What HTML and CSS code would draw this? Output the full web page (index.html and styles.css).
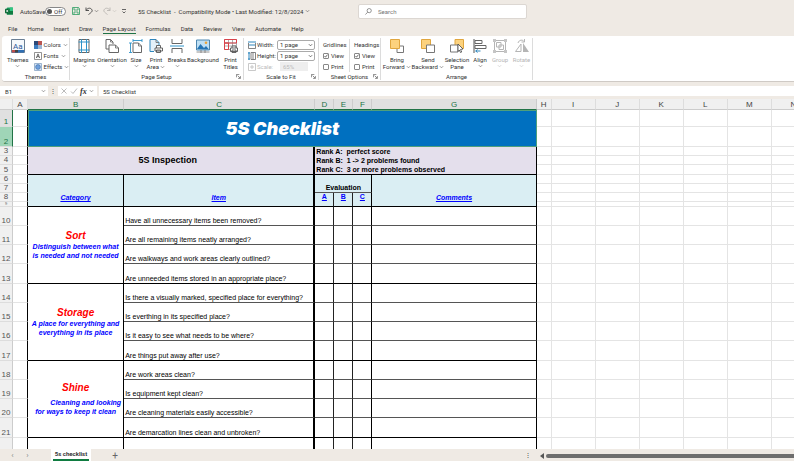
FILE: index.html
```
<!DOCTYPE html>
<html lang="en">
<head>
<meta charset="UTF-8">
<meta name="viewport" content="width=device-width, initial-scale=1.0">
<title>5S Checklist</title>
<link rel="stylesheet" href="styles.css">
</head>
<body>
<svg class="defs" width="0" height="0">
  <symbol id="chev" viewBox="0 0 6 4"><path d="M1 1l2 2 2-2" fill="none" stroke="currentColor" stroke-width=".8"/></symbol>
  <symbol id="launch" viewBox="0 0 6 6"><path d="M.5 4V.5H4M2 2l3 3M5.300 2.500v2.800H2.500" fill="none" stroke="#555" stroke-width=".8"/></symbol>
</svg>

<header class="titlebar">
  <svg class="logo" viewBox="0 0 9 8"><rect x="2" width="7" height="8" rx="1" fill="#21a366"/><rect x="5.500" width="3.500" height="4" fill="#33c481"/><rect x="2" y="4" width="7" height="4" fill="#107c41"/><rect y="1.500" width="5" height="5" rx=".6" fill="#0b6a37"/><path d="M1.500 2.700l2 2.600M3.500 2.700l-2 2.600" stroke="#fff" stroke-width=".8"/></svg>
  <span class="autosave">AutoSave</span>
  <button class="toggle"><i></i>Off</button>
  <button class="tool save" aria-label="Save"><svg viewBox="0 0 8 8"><path d="M.5.500h6l1 1v6h-7zM2 .5v2.500h4V.5M2 7.500V5h4v2.500" fill="none" stroke="#2f9e62" stroke-width=".8"/></svg></button>
  <button class="tool undo" aria-label="Undo"><svg viewBox="0 0 8 8"><path d="M1 .5v3h3M1 3.500C2.500 1 5 .5 6.500 2.200S7 5 3.500 7.500" fill="none" stroke="#444" stroke-width=".9"/></svg><svg class="chev"><use href="#chev"/></svg></button>
  <button class="tool redo" aria-label="Redo"><svg viewBox="0 0 8 8"><path d="M7 .5v3H4M7 3.500C5.500 1 3 .5 1.500 2.200S1 5 4.500 7.500" fill="none" stroke="#b9b5b1" stroke-width=".9"/></svg><svg class="chev"><use href="#chev"/></svg></button>
  <button class="tool more" aria-label="Customize"><svg viewBox="0 0 8 8"><path d="M2 2.500h4M2.500 4.500L4 6l1.500-1.500" fill="none" stroke="#444" stroke-width=".8"/></svg></button>
  <button class="doc">5S Checklist &nbsp;-&nbsp; Compatibility Mode • Last Modified: 12/8/2024 <svg class="chev"><use href="#chev"/></svg></button>
  <label class="search"><svg viewBox="0 0 8 8"><circle cx="4.800" cy="3" r="2.400" fill="none" stroke="#555" stroke-width=".7"/><path d="M3 4.800L.5 7.500" stroke="#555" stroke-width=".7"/></svg><input type="text" placeholder="Search" aria-label="Search"></label>
</header>

<nav class="tabs">
  <a href="#">File</a><a href="#">Home</a><a href="#">Insert</a><a href="#">Draw</a><a href="#" class="active">Page Layout</a><a href="#">Formulas</a><a href="#">Data</a><a href="#">Review</a><a href="#">View</a><a href="#">Automate</a><a href="#">Help</a>
</nav>

<section class="ribbon">
  <div class="group themes">
    <div class="tools">
      <button class="big"><svg viewBox="0 0 14 14"><path d="M.5.500h13v13H.5z" fill="#f4f8fc" stroke="#6b7f94"/><path d="M1 11h12v2.500H1z" fill="#2f6fb3"/><path d="M1 11h3v2.500H1z" fill="#c0504d"/><path d="M4 11h3v2.500H4z" fill="#444"/><text x="2" y="9.500" class="aa">Aa</text></svg>Themes<svg class="chev"><use href="#chev"/></svg></button>
      <div class="stack">
        <button><svg viewBox="0 0 8 8"><path d="M0 0h4v4H0z" fill="#2b4a78"/><path d="M4 0h4v4H4z" fill="#b85450"/><path d="M0 4h4v4H0z" fill="#3c7cc0"/><path d="M4 4h4v4H4z" fill="#9db7d4"/></svg>Colors<svg class="chev"><use href="#chev"/></svg></button>
        <button><svg viewBox="0 0 8 8"><path d="M.5.500h7v7h-7z" fill="#fff" stroke="#777" stroke-width=".8"/><path d="M2.300 6L4 1.900 5.700 6M3 4.700h2" fill="none" stroke="#333" stroke-width=".7"/></svg>Fonts<svg class="chev"><use href="#chev"/></svg></button>
        <button><svg viewBox="0 0 8 8"><path d="M.5.500h7v7h-7z" fill="#d9e6f4" stroke="#88a3c4" stroke-width=".8"/><circle cx="4" cy="4" r="2.400" fill="#6fa0dc" stroke="#3d6ba8" stroke-width=".6"/></svg>Effects<svg class="chev"><use href="#chev"/></svg></button>
      </div>
    </div>
    <div class="caption">Themes</div>
  </div>

  <div class="group setup">
    <div class="tools">
      <button class="big"><svg viewBox="0 0 14 14"><path d="M2 .5h10v13H2z" fill="#fff" stroke="#666"/><path d="M4.500 0v14M9.500 0v14M1.500 3h11M1.500 11h11" stroke="#2e93c9" fill="none"/></svg>Margins<svg class="chev"><use href="#chev"/></svg></button>
      <button class="big"><svg viewBox="0 0 14 14"><path d="M4 10H1V.5h4.500L8 3v2" fill="none" stroke="#666"/><path d="M5.500.500V3H8" fill="none" stroke="#666" stroke-width=".8"/><path d="M4 6h6.500L13.500 9v4.500H4z" fill="#fff" stroke="#666"/><path d="M10.500 6v3h3" fill="none" stroke="#666" stroke-width=".8"/></svg>Orientation<svg class="chev"><use href="#chev"/></svg></button>
      <button class="big"><svg viewBox="0 0 14 14"><path d="M4 4h5.500L12.500 7v6.500H4z" fill="#fff" stroke="#666"/><path d="M9.500 4v3h3" fill="none" stroke="#666" stroke-width=".8"/><path d="M4 1.500h9M4 0v3M13 0v3M1.500 4v9.500M0 4h3M0 13.500h3" stroke="#2e93c9" stroke-width=".9"/></svg>Size<svg class="chev"><use href="#chev"/></svg></button>
      <button class="big"><svg viewBox="0 0 14 14"><path d="M5 12.500H1V.5h6L10 3.500V6" fill="#e4f1fa" stroke="#2e86bd"/><path d="M7 .5v3h3" fill="none" stroke="#666" stroke-width=".8"/><path d="M7.500 9V6.500h4V9M6 9h7.500v3H6zM7.500 11h4v2.500h-4z" fill="#fff" stroke="#555" stroke-width=".9"/></svg>Print<span>Area <svg class="chev"><use href="#chev"/></svg></span></button>
      <button class="big"><svg viewBox="0 0 14 14"><path d="M2 0v4.500h10V0M2 14V9.500h10V14" fill="none" stroke="#666"/><path d="M0 7h14" stroke="#2e93c9"/></svg>Breaks<svg class="chev"><use href="#chev"/></svg></button>
      <button class="big"><svg viewBox="0 0 14 14"><path d="M.5 1h13v10H.5z" fill="#bfe0f5" stroke="#4c86b0"/><path d="M1 10l3.500-5L8 9l2-2 3 3.500z" fill="#2374b5"/><circle cx="10" cy="3.800" r="1.300" fill="#e8a33a"/><path d="M.5 13h13M5 11v3M9 11v3" stroke="#777" stroke-width=".8"/></svg>Background</button>
      <button class="big"><svg viewBox="0 0 14 14"><path d="M.5.500h12v10H.5zM.5 4h12M.5 7h12M4.500.500v10M8.500.500v10" fill="none" stroke="#999" stroke-width=".8"/><path d="M.5.500h12V4h-12zM.5 4h4v6.500h-4z" fill="none" stroke="#d8434a"/><path d="M8 9V7h4v2M6.500 9h7v3.500h-7zM8 11h4v2.500H8z" fill="#fff" stroke="#555" stroke-width=".9"/></svg>Print<span>Titles</span></button>
    </div>
    <div class="caption">Page Setup<svg class="launch"><use href="#launch"/></svg></div>
  </div>

  <div class="group scale">
    <div class="tools">
      <div class="row"><svg viewBox="0 0 8 8"><path d="M.5 2v5.500h7V2" fill="none" stroke="#666" stroke-width=".8"/><path d="M0 1h8M1 4h6" stroke="#2e86bd"/></svg><label for="width">Width:</label><select id="width"><option>1 page</option></select></div>
      <div class="row"><svg viewBox="0 0 8 8"><path d="M3 .5h4.500v7H3zM5 .5v7" fill="none" stroke="#666" stroke-width=".8"/><path d="M1 0v8M0 1h2M0 7h2" stroke="#2e86bd"/></svg><label for="height">Height:</label><select id="height"><option>1 page</option></select></div>
      <div class="row off"><svg viewBox="0 0 8 8"><path d="M.5.500h7v7h-7zM2 4h4M4 2v4" fill="none" stroke="#bbb" stroke-width=".8"/></svg><label for="scale">Scale:</label><input id="scale" type="text" value="65%" disabled></div>
    </div>
    <div class="caption">Scale to Fit<svg class="launch"><use href="#launch"/></svg></div>
  </div>

  <div class="group options">
    <div class="tools">
      <div class="checks"><span>Gridlines</span><label><input type="checkbox" checked>View</label><label><input type="checkbox">Print</label></div>
      <div class="checks"><span>Headings</span><label><input type="checkbox" checked>View</label><label><input type="checkbox">Print</label></div>
    </div>
    <div class="caption">Sheet Options<svg class="launch"><use href="#launch"/></svg></div>
  </div>

  <div class="group arrange">
    <div class="tools">
      <button class="big"><svg viewBox="0 0 14 14"><path d="M7 7h6.500v6.500H7z" fill="#fff" stroke="#777"/><path d="M.5.500h9v9h-9z" fill="#fcd27e" stroke="#e0a63f"/></svg>Bring<span>Forward <svg class="chev"><use href="#chev"/></svg></span></button>
      <button class="big"><svg viewBox="0 0 14 14"><path d="M.5.500h9v9h-9z" fill="#fcd27e" stroke="#e0a63f"/><path d="M5.500 6h8v7.500h-8z" fill="#fff" stroke="#777"/></svg>Send<span>Backward <svg class="chev"><use href="#chev"/></svg></span></button>
      <button class="big"><svg viewBox="0 0 14 14"><path d="M5 .5h8.500v9H5z" fill="#fcd27e" stroke="#e0a63f"/><path d="M.5 6H8v7H.5z" fill="#fff" stroke="#777"/><path d="M8 5l5 5-2.500.500 1.200 2.500-1.200.6L9.300 11 8 12.500z" fill="#fff" stroke="#444" stroke-width=".8"/></svg>Selection<span>Pane</span></button>
      <button class="big"><svg viewBox="0 0 14 14"><path d="M1 0v14" stroke="#555"/><path d="M2 1.500h7v3H2zM2 6.500h11v3H2z" fill="#fff" stroke="#666"/><path d="M2.500 12h5M4.500 10.500L2.800 12l1.700 1.500" fill="none" stroke="#2e86bd"/></svg>Align<svg class="chev"><use href="#chev"/></svg></button>
      <button class="big" disabled><svg viewBox="0 0 14 14"><path d="M1.500 1.500h11v11h-11zM3.500 3.500H8V8H3.500zM6 6h4.500v4.500H6z" fill="none" stroke="#b5b5b5"/><path d="M0 0h3v3H0zM11 0h3v3h-3zM0 11h3v3H0zM11 11h3v3h-3z" fill="#c5c5c5"/></svg>Group<svg class="chev"><use href="#chev"/></svg></button>
      <button class="big" disabled><svg viewBox="0 0 14 14"><path d="M.5 12.500L6 5v7.500z" fill="none" stroke="#b5b5b5"/><path d="M8 4l6 9H8z" fill="#b5b5b5"/><path d="M3 4C4 .5 8 .5 9 2.500M9.500 0v3h-3" fill="none" stroke="#b5b5b5"/></svg>Rotate<svg class="chev"><use href="#chev"/></svg></button>
    </div>
    <div class="caption">Arrange</div>
  </div>
</section>

<div class="formulabar">
  <label class="namebox"><input type="text" value="B1" aria-label="Name box"><svg class="chev"><use href="#chev"/></svg></label>
  <span class="dots">⋮</span>
  <div class="fx">
    <svg viewBox="0 0 8 8"><path d="M1.500 1.500l5 5M6.500 1.500l-5 5" stroke="#bbb"/></svg>
    <svg viewBox="0 0 8 8"><path d="M1 4.500l2 2 4-5" fill="none" stroke="#bbb"/></svg>
    <em>fx</em>
    <svg class="chev"><use href="#chev"/></svg>
  </div>
  <input class="formula" type="text" value="5S Checklist" aria-label="Formula">
</div>

<main class="sheet">
<table>
  <colgroup><col class="c-num"><col class="c-a"><col class="c-b"><col class="c-c"><col class="c-d"><col class="c-d"><col class="c-f"><col class="c-g"><col class="c-h"><col class="c-i"><col class="c-i"><col class="c-i"><col class="c-i"><col class="c-i"><col class="c-i"></colgroup>
  <thead>
    <tr><th class="corner"></th><th>A</th><th class="sel">B</th><th class="sel">C</th><th class="sel">D</th><th class="sel">E</th><th class="sel">F</th><th class="sel">G</th><th>H</th><th>I</th><th>J</th><th>K</th><th>L</th><th>M</th><th>N</th></tr>
  </thead>
  <tbody>
    <tr class="r1"><th class="rowsel">1</th><td class="a"></td><td class="title" colspan="6" rowspan="2">5S Checklist</td><td class="blank" colspan="7"></td></tr>
    <tr class="r2"><th class="rowon">2</th><td class="a"></td><td class="blank" colspan="7"></td></tr>
    <tr class="thin"><th>3</th><td class="a"></td><td class="inspection" colspan="2" rowspan="3">5S Inspection</td><td class="rank" colspan="4">Rank A:&nbsp; perfect score</td><td class="blank" colspan="7"></td></tr>
    <tr class="thin"><th>4</th><td class="a"></td><td class="rank" colspan="4">Rank B:&nbsp; 1 -&gt; 2 problems found</td><td class="blank" colspan="7"></td></tr>
    <tr class="thin last"><th>5</th><td class="a"></td><td class="rank end" colspan="4">Rank C:&nbsp; 3 or more problems observed</td><td class="blank" colspan="7"></td></tr>
    <tr class="thin"><th>6</th><td class="a"></td><td class="head" rowspan="4"><a href="#">Category</a></td><td class="head item-head" rowspan="4"><a href="#">Item</a></td><td class="eval" colspan="3" rowspan="2">Evaluation</td><td class="head comments" rowspan="4"><a href="#">Comments</a></td><td class="blank" colspan="7"></td></tr>
    <tr class="thin"><th>7</th><td class="a"></td><td class="blank" colspan="7"></td></tr>
    <tr class="thin"><th>8</th><td class="a"></td><td class="abc" rowspan="2"><a href="#">A</a></td><td class="abc" rowspan="2"><a href="#">B</a></td><td class="abc f" rowspan="2"><a href="#">C</a></td><td class="blank" colspan="7"></td></tr>
    <tr class="r9"><th>9</th><td class="a"></td><td class="blank" colspan="7"></td></tr>

    <tr><th>10</th><td class="a"></td><td class="cat" rowspan="4"><b>Sort</b>Distinguish between what is needed and not needed</td><td class="item">Have all unnecessary items been removed?</td><td></td><td></td><td class="f"></td><td class="g"></td><td class="blank" colspan="7"></td></tr>
    <tr><th>11</th><td class="a"></td><td class="item">Are all remaining items neatly arranged?</td><td></td><td></td><td class="f"></td><td class="g"></td><td class="blank" colspan="7"></td></tr>
    <tr><th>12</th><td class="a"></td><td class="item">Are walkways and work areas clearly outlined?</td><td></td><td></td><td class="f"></td><td class="g"></td><td class="blank" colspan="7"></td></tr>
    <tr class="last"><th>13</th><td class="a"></td><td class="item">Are unneeded items stored in an appropriate place?</td><td></td><td></td><td class="f"></td><td class="g"></td><td class="blank" colspan="7"></td></tr>

    <tr><th>14</th><td class="a"></td><td class="cat" rowspan="4"><b>Storage</b>A place for everything and everything in its place</td><td class="item">Is there a visually marked, specified place for everything?</td><td></td><td></td><td class="f"></td><td class="g"></td><td class="blank" colspan="7"></td></tr>
    <tr><th>15</th><td class="a"></td><td class="item">Is everthing in its specified place?</td><td></td><td></td><td class="f"></td><td class="g"></td><td class="blank" colspan="7"></td></tr>
    <tr><th>16</th><td class="a"></td><td class="item">Is it easy to see what needs to be where?</td><td></td><td></td><td class="f"></td><td class="g"></td><td class="blank" colspan="7"></td></tr>
    <tr class="last"><th>17</th><td class="a"></td><td class="item">Are things put away after use?</td><td></td><td></td><td class="f"></td><td class="g"></td><td class="blank" colspan="7"></td></tr>

    <tr><th>18</th><td class="a"></td><td class="cat shine" rowspan="4"><b>Shine</b><span>Cleaning and looking</span>for ways to keep it clean</td><td class="item">Are work areas clean?</td><td></td><td></td><td class="f"></td><td class="g"></td><td class="blank" colspan="7"></td></tr>
    <tr><th>19</th><td class="a"></td><td class="item">Is equipment kept clean?</td><td></td><td></td><td class="f"></td><td class="g"></td><td class="blank" colspan="7"></td></tr>
    <tr><th>20</th><td class="a"></td><td class="item">Are cleaning materials easily accessible?</td><td></td><td></td><td class="f"></td><td class="g"></td><td class="blank" colspan="7"></td></tr>
    <tr class="last"><th>21</th><td class="a"></td><td class="item">Are demarcation lines clean and unbroken?</td><td></td><td></td><td class="f"></td><td class="g"></td><td class="blank" colspan="7"></td></tr>

    <tr><th></th><td class="a"></td><td class="cat"></td><td class="item"></td><td></td><td></td><td class="f"></td><td class="g"></td><td class="blank" colspan="7"></td></tr>
  </tbody>
</table>
</main>

<footer class="statusbar">
  <button class="nav" aria-label="Previous sheet">‹</button>
  <button class="nav" aria-label="Next sheet">›</button>
  <button class="sheettab"><span>5s checklist</span></button>
  <button class="add" aria-label="New sheet">+</button>
  <div class="scroll"><span class="dots">⋮</span><svg viewBox="0 0 4 6"><path d="M4 0v6L0 3z" fill="#555"/></svg><div class="bar"></div></div>
</footer>
</body>
</html>
```
FILE: styles.css
```
* {
  box-sizing: border-box;
}
body {
  margin: 0;
  height: 100vh;
  display: flex;
  flex-direction: column;
  overflow: hidden;
  background: #efeae4;
  font-family: Roboto, "Open Sans", sans-serif;
  font-size: 6px;
  line-height: 7px;
  color: #333;
}
button, input, select {
  font: inherit;
  color: inherit;
  background: none;
  border: none;
  padding: 0;
  margin: 0;
}
a {
  color: inherit;
  text-decoration: none;
}
svg {
  flex: none;
}
.defs {
  position: absolute;
}
.chev {
  width: 5px;
  height: 4px;
  opacity: .7;
}
.launch {
  width: 5px;
  height: 5px;
}

/* title bar */
.titlebar {
  height: 22px;
  flex: none;
  display: flex;
  align-items: center;
  padding-left: 5px;
  white-space: nowrap;
}
.logo {
  width: 8px;
  height: 8px;
  margin-right: 7px;
}
.autosave {
  width: 25px;
}
.toggle {
  width: 21px;
  height: 9px;
  display: flex;
  align-items: center;
  gap: 2px;
  border: 1px solid #888;
  border-radius: 5px;
  background: #fff;
  padding-left: 1px;
}
.toggle i {
  width: 5px;
  height: 5px;
  border-radius: 50%;
  background: #555;
}
.tool {
  display: flex;
  align-items: center;
  gap: 1px;
}
.tool svg:first-child {
  width: 8px;
  height: 8px;
}
.save {
  margin-left: 6px;
}
.undo {
  margin-left: 5px;
}
.redo {
  margin-left: 4px;
  color: #b9b5b1;
}
.more {
  margin-left: 3px;
}
.doc {
  display: flex;
  align-items: center;
  gap: 2px;
  margin-left: 10px;
  width: 220px;
}
.search {
  width: 169px;
  height: 15px;
  display: flex;
  align-items: center;
  gap: 6px;
  padding-left: 6px;
  background: #fff;
  border: 1px solid #dcd7d2;
  border-radius: 2px;
}
.search svg {
  width: 7px;
  height: 7px;
}
.search input {
  flex: 1;
  outline: none;
}

/* menu tabs */
.tabs {
  height: 14px;
  flex: none;
  display: flex;
  align-items: flex-start;
  gap: 10px;
  padding: 3px 0 0 8px;
}
.tabs a {
  height: 9px;
  line-height: 8px;
}
.tabs .active {
  border-bottom: 1px solid #217346;
}

/* ribbon */
.ribbon {
  height: 46px;
  flex: none;
  display: flex;
  margin-left: 2px;
  background: #fff;
  border-bottom: 1px solid #cfcac5;
  border-radius: 3px 0 0 3px;
}
.group {
  display: flex;
  flex-direction: column;
  justify-content: space-between;
  margin: 2px 0 1px;
  border-right: 1px solid #dcdcdc;
}
.tools {
  padding-top: 1px;
}
.caption {
  position: relative;
  text-align: center;
}
.caption .launch {
  position: absolute;
  right: 2px;
  top: 1px;
}
.big {
  display: flex;
  flex-direction: column;
  align-items: center;
  white-space: nowrap;
}
.big > svg:first-child {
  width: 14px;
  height: 14px;
  margin-bottom: 3px;
}
.big > .chev {
  margin-top: 1px;
}
.big:disabled {
  color: #b5b5b5;
}
.aa {
  font-size: 8px;
  fill: #2b579a;
}
.themes {
  width: 68px;
}
.themes .tools {
  display: flex;
  gap: 5px;
  padding-left: 5px;
}
.stack button {
  display: flex;
  align-items: center;
  gap: 2px;
  height: 11px;
}
.stack svg:first-child {
  width: 8px;
  height: 8px;
}
.setup .tools {
  display: grid;
  grid-template-columns: 28px 28px 20px 20px 22px 30px 25px;
  justify-items: center;
  align-items: start;
}
.arrange .tools {
  display: grid;
  grid-template-columns: 32px 30px 28px 18px 22px 21px;
  justify-items: center;
  align-items: start;
}
.scale {
  width: 75px;
}
.row {
  display: flex;
  align-items: center;
  height: 11px;
  padding: 0 3px 0 4px;
}
.row svg {
  width: 8px;
  height: 8px;
}
.row label {
  width: 21px;
  padding-left: 1px;
}
.row select {
  flex: 1;
  min-width: 0;
  height: 10px;
  padding-left: 2px;
  border: 1px solid #aaa;
  border-radius: 2px;
  appearance: none;
  background: url("data:image/svg+xml,%3Csvg xmlns='http://www.w3.org/2000/svg' viewBox='0 0 6 4'%3E%3Cpath d='M1 1l2 2 2-2' fill='none' stroke='%23333' stroke-width='.8'/%3E%3C/svg%3E") no-repeat right 1px center / 5px 4px #fff;
}
.row input {
  width: 28px;
  height: 9px;
  margin-left: 3px;
  padding-left: 3px;
  background: #eee;
}
.off {
  color: #bbb;
}
.options {
  width: 62px;
}
.options .tools {
  display: flex;
}
.checks {
  flex: 1;
  display: flex;
  flex-direction: column;
  padding-left: 4px;
}
.checks:first-child {
  border-right: 1px solid #dcdcdc;
}
.checks span, .checks label {
  height: 11px;
  display: flex;
  align-items: center;
  gap: 2px;
}
.checks input {
  appearance: none;
  width: 6px;
  height: 6px;
  border: 1px solid #888;
  border-radius: 1px;
  background: #fff;
}
.checks input:checked {
  background: url("data:image/svg+xml,%3Csvg xmlns='http://www.w3.org/2000/svg' viewBox='0 0 4 4'%3E%3Cpath d='M.5 2l1 1.200L3.500.600' fill='none' stroke='%23333' stroke-width='.7'/%3E%3C/svg%3E") center / 4px 4px no-repeat #fff;
}

/* formula bar */
.formulabar {
  height: 10px;
  flex: none;
  display: flex;
  align-items: stretch;
  margin: 4px 0 3px;
}
.namebox {
  width: 48px;
  display: flex;
  align-items: center;
  background: #fff;
  padding: 0 2px 0 5px;
}
.namebox input {
  flex: 1;
  min-width: 0;
}
.dots {
  width: 10px;
  text-align: center;
  line-height: 10px;
}
.fx {
  width: 39px;
  display: flex;
  align-items: center;
  gap: 2px;
  padding-left: 2px;
  background: #fff;
}
.fx svg:not(.chev) {
  width: 8px;
  height: 8px;
}
.fx em {
  font: italic bold 8px "Liberation Serif", serif;
}
.formula {
  flex: 1;
  margin-left: 2px;
  padding-left: 4px;
  background: #fff;
}

/* sheet */
.sheet {
  flex: 1;
  min-height: 0;
  overflow: hidden;
  background: #fff;
  font-family: "Liberation Sans", Arial, sans-serif;
  color: #000;
}
table {
  table-layout: fixed;
  width: 816px;
  border-collapse: separate;
  border-spacing: 0;
}
.c-num { width: 13px; }
.c-a { width: 15px; }
.c-b { width: 96px; }
.c-c { width: 191px; }
.c-d { width: 19px; }
.c-f { width: 19px; }
.c-g { width: 164px; }
.c-h { width: 15px; }
.c-i { width: 44px; }
th, td {
  padding: 0;
  overflow: hidden;
}
thead th {
  height: 11px;
  font-size: 8px;
  line-height: 9px;
  font-weight: normal;
  color: #444;
  background: #f0f0f0;
  border-right: 1px solid #ddd;
  border-bottom: 1px solid #ccc;
}
thead .sel {
  background: #e0e0e0;
  color: #217346;
  border-right-color: #ccc;
  border-bottom-color: #217346;
}
tbody tr {
  height: 19px;
}
tbody tr.last {
  height: 20px;
}
tbody th {
  font-size: 8px;
  line-height: 8px;
  font-weight: normal;
  vertical-align: bottom;
  color: #555;
  background: #f0f0f0;
  border-right: 1px solid #ccc;
  border-bottom: 1px solid #ddd;
}
tbody td {
  border-right: 1px solid #222;
  border-bottom: 1px solid #555;
}
tbody td.a {
  border-right: 1px solid #000;
  border-bottom: 1px solid #e4e4e4;
}
tbody td.blank {
  border-right: none;
  border-bottom: 1px solid #e4e4e4;
  background: linear-gradient(#e4e4e4, #e4e4e4) 14px 0 / 1px 100% no-repeat, repeating-linear-gradient(90deg, transparent 0 43px, #e4e4e4 43px 44px) 15px 0 no-repeat;
}
tbody tr.r1 { height: 17px; }
tbody tr.r2 { height: 20px; }
tbody tr.thin { height: 9px; }
tbody tr.r9 { height: 5px; }
.thin th {
  line-height: 8px;
}
.r9 th {
  font-size: 4px;
  line-height: 4px;
}
tbody .rowsel {
  background: #e0e0e0;
  color: #217346;
  border-right-color: #217346;
}
tbody .rowon {
  background: #9fd5b7;
  color: #217346;
  border-right-color: #217346;
}
tbody td.title {
  background: #0070c0;
  border: 1px solid #4f9f7c;
  color: #fff;
  text-align: center;
  font: italic 900 18px Inter, sans-serif;
  line-height: 18px;
}
tbody td.inspection {
  background: #e4dfec;
  text-align: center;
  font-weight: bold;
  font-size: 9px;
  padding-right: 6px;
  border-right: 2px solid #000;
  border-bottom: 1px solid #000;
}
tbody td.rank {
  background: #e4dfec;
  font-weight: bold;
  font-size: 7px;
  line-height: 8px;
  padding-left: 1px;
  border-bottom: none;
  border-right: 1px solid #000;
}
tbody td.rank.end {
  border-bottom: 1px solid #000;
}
tbody td.head, tbody td.eval, tbody td.abc {
  background: #daeef3;
  text-align: center;
  vertical-align: bottom;
  font-weight: bold;
  font-size: 7px;
  line-height: 8px;
}
tbody td.head {
  padding-bottom: 4px;
  font-style: italic;
  border-right: 1px solid #000;
  border-bottom: 1px solid #000;
}
tbody td.item-head {
  border-right-width: 2px;
}
.head a, .abc a {
  color: #0000ff;
  text-decoration: underline;
}
tbody td.abc {
  vertical-align: top;
  border-bottom-color: #000;
}
tbody td.item {
  font-size: 7px;
  line-height: 8px;
  vertical-align: bottom;
  white-space: nowrap;
  padding: 0 0 0 1px;
  border-right: 2px solid #000;
}
tbody td.f, tbody td.eval {
  border-right: 1px solid #000;
}
tbody td.g {
  border-right: 1px solid #000;
}
.last td:not(.a):not(.blank) {
  border-bottom: 1px solid #000;
}
tbody tr.thin.last {
  height: 10px;
}
tbody td.cat {
  padding: 0 2px;
  text-align: center;
  font-style: italic;
  font-weight: bold;
  font-size: 7px;
  line-height: 9px;
  color: #0000ff;
  border-right: 1px solid #000;
  border-bottom: 1px solid #000;
}
.cat b {
  display: block;
  font-size: 10px;
  line-height: 12px;
  color: #ff0000;
}
.shine span {
  display: block;
  text-align: right;
  padding-top: 4px;
}

/* bottom bar */
.statusbar {
  height: 12px;
  flex: none;
  display: flex;
  align-items: stretch;
  padding-left: 5px;
}
.nav {
  width: 15px;
  font-size: 8px;
  color: #888;
}
.sheettab {
  width: 40px;
  margin-left: 16px;
  background: #fff;
  font-weight: bold;
  white-space: nowrap;
}
.sheettab span {
  display: block;
  margin: 0 2px;
  line-height: 10px;
  border-bottom: 2px solid #107c41;
}
.add {
  width: 48px;
  font-size: 10px;
  color: #666;
}
.scroll {
  flex: 1;
  display: flex;
  align-items: center;
  padding-left: 384px;
}
.scroll svg {
  width: 4px;
  height: 6px;
  margin: 2px 2px 0 7px;
}
.bar {
  flex: 1;
  height: 4px;
  margin-top: 2px;
  border-radius: 2px 0 0 2px;
  background: #6e6e6e;
}
```
